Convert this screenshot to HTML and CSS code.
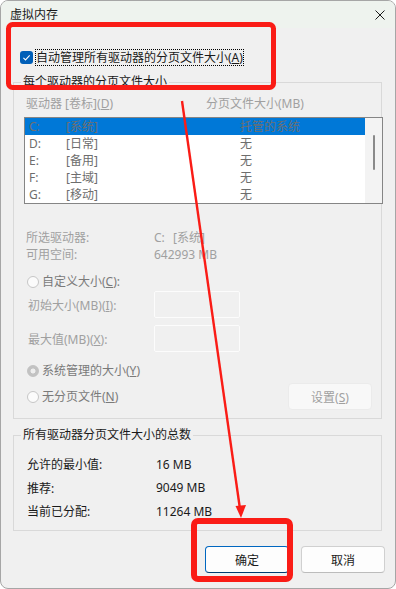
FILE: index.html
```html
<!DOCTYPE html>
<html lang="zh-CN">
<head>
<meta charset="utf-8">
<title>虚拟内存</title>
<link rel="stylesheet" href="styles.css">
</head>
<body>
<div class="window">
  <div class="titlebar">
    <span class="title">虚拟内存</span>
    <svg class="close" width="10" height="10" viewBox="0 0 10 10"><path d="M0.5 0.5L9.5 9.5M9.5 0.5L0.5 9.5" stroke="#1a1a1a" stroke-width="1" fill="none"/></svg>
  </div>

  <div class="auto-row">
    <span class="checkbox"><svg width="13" height="13" viewBox="0 0 13 13"><rect x="0" y="0" width="13" height="13" rx="3" fill="#005fb8"/><path d="M3.4 6.9L5.5 8.9L9.7 4.4" stroke="#fff" stroke-width="1.1" fill="none"/></svg></span>
    <span class="focus">自动管理所有驱动器的分页文件大小(<u>A</u>)</span>
  </div>

  <fieldset class="group g1">
    <legend>每个驱动器的分页文件大小</legend>
    <div class="list-head"><span class="col-drive">驱动器 [卷标](<u>D</u>)</span><span class="col-size">分页文件大小(MB)</span></div>
    <div class="listbox">
      <div class="rows">
        <div class="row sel"><span class="c1">C:</span><span class="c2">[系统]</span><span class="c3">托管的系统</span></div>
        <div class="row"><span class="c1">D:</span><span class="c2">[日常]</span><span class="c3">无</span></div>
        <div class="row"><span class="c1">E:</span><span class="c2">[备用]</span><span class="c3">无</span></div>
        <div class="row"><span class="c1">F:</span><span class="c2">[主域]</span><span class="c3">无</span></div>
        <div class="row"><span class="c1">G:</span><span class="c2">[移动]</span><span class="c3">无</span></div>
      </div>
      <div class="scrollbar"><span class="thumb"></span></div>
    </div>

    <div class="info">
      <div class="info-row"><span class="k">所选驱动器:</span><span class="v"><span class="drv">C:</span>[系统]</span></div>
      <div class="info-row"><span class="k">可用空间:</span><span class="v">642993 MB</span></div>
    </div>

    <div class="radio-row r-custom"><span class="radio"></span><span class="rtext">自定义大小(<u>C</u>):</span></div>
    <div class="field-row"><span class="k2">初始大小(MB)(<u>I</u>):</span><span class="input"></span></div>
    <div class="field-row f2"><span class="k2">最大值(MB)(<u>X</u>):</span><span class="input"></span></div>
    <div class="radio-row r-sys"><span class="radio checked"></span><span class="rtext">系统管理的大小(<u>Y</u>)</span></div>
    <div class="last-row">
      <div class="radio-row"><span class="radio"></span><span class="rtext">无分页文件(<u>N</u>)</span></div>
      <button class="btn-set" type="button">设置(<u>S</u>)</button>
    </div>
  </fieldset>

  <fieldset class="group g2">
    <legend>所有驱动器分页文件大小的总数</legend>
    <div class="sum-row"><span class="sk">允许的最小值:</span><span class="sv">16 MB</span></div>
    <div class="sum-row"><span class="sk">推荐:</span><span class="sv">9049 MB</span></div>
    <div class="sum-row"><span class="sk">当前已分配:</span><span class="sv">11264 MB</span></div>
  </fieldset>

  <div class="buttons">
    <button class="btn primary" type="button">确定</button>
    <button class="btn" type="button">取消</button>
  </div>

  <svg class="annot" width="396" height="589" viewBox="0 0 396 589">
    <rect x="8.5" y="24.5" width="265" height="63" rx="4" fill="none" stroke="#fa1c16" stroke-width="5"/>
    <rect x="194" y="521" width="96" height="58" rx="4" fill="none" stroke="#fa1c16" stroke-width="6"/>
    <line x1="182" y1="101" x2="240" y2="509" stroke="#fa1c16" stroke-width="2.4"/>
    <polygon points="241,518 235.5,506 246,505" fill="#fa1c16"/>
  </svg>
</div>
</body>
</html>
```

FILE: styles.css
```css
html, body {
  margin: 0;
  padding: 0;
  background: #ffffff;
}

body {
  font-family: "Noto Sans", "Noto Sans CJK SC", sans-serif;
  font-size: 12px;
  color: #1a1a1a;
}

.window {
  position: relative;
  width: 396px;
  height: 589px;
  box-sizing: border-box;
  border: 1px solid #a6a6a6;
  border-radius: 8px;
  background: #f0f0f0;
  overflow: hidden;
}

.titlebar {
  height: 27px;
  display: flex;
  align-items: center;
  justify-content: space-between;
  padding: 0 10px 0 9px;
  background: #eef3ee;
}

.title {
  line-height: 16px;
  color: #1a1a1a;
}

.close {
  display: block;
}

u {
  text-decoration: underline;
  text-underline-offset: 1px;
}

.auto-row {
  margin-top: 21px;
  height: 17px;
  display: flex;
  align-items: center;
  padding-left: 19px;
}

.checkbox {
  width: 13px;
  height: 13px;
  display: block;
}

.checkbox svg {
  display: block;
}

.focus {
  margin-left: 2px;
  height: 17px;
  line-height: 17px;
  padding: 0 1px;
  box-sizing: border-box;
  outline: 1px dotted #000;
  outline-offset: -1px;
  color: #1a1a1a;
  white-space: nowrap;
}

.group {
  margin: 0 13px 0 12px;
  border: 1px solid #d9d9d9;
  min-width: 0;
}

.group legend {
  padding: 0 2px;
  margin-left: 7px;
  line-height: 16px;
  color: #1a1a1a;
}

.g1 {
  margin-top: 8px;
  padding: 6px 0 8px 0;
}

.list-head {
  display: flex;
  line-height: 16px;
  padding-left: 12px;
  color: #a0a0a0;
}

.col-drive {
  width: 180px;
}

.listbox {
  margin-top: 5px;
  margin-left: 10px;
  width: 359px;
  height: 87px;
  box-sizing: border-box;
  border: 1px solid #858585;
  background: #ffffff;
  display: flex;
}

.rows {
  flex: 1;
}

.row {
  height: 17px;
  line-height: 17px;
  display: flex;
  padding-left: 4px;
  color: #6d6d6d;
}

.row.sel {
  background: #0078d7;
  color: #6f6f6f;
}

.c1 {
  width: 37px;
}

.c2 {
  width: 174px;
}

.scrollbar {
  width: 17px;
  background: #f3f3f3;
  position: relative;
}

.thumb {
  position: absolute;
  left: 8px;
  top: 17px;
  width: 2px;
  height: 35px;
  border-radius: 1px;
  background: #8a8a8a;
}

.info {
  margin-top: 25px;
  padding-left: 12px;
  color: #a0a0a0;
}

.info-row {
  height: 17px;
  line-height: 17px;
  display: flex;
}

.k {
  width: 128px;
}

.drv {
  display: inline-block;
  width: 19px;
}

.radio-row {
  height: 18px;
  display: flex;
  align-items: center;
  padding-left: 13px;
  color: #7a7a7a;
}

.r-custom {
  margin-top: 10px;
}

.r-sys {
  margin-top: 10px;
}

.radio {
  width: 12px;
  height: 12px;
  box-sizing: border-box;
  border-radius: 50%;
  border: 1px solid #c6c6c6;
  background: #fbfbfb;
  margin-right: 3px;
}

.radio.checked {
  border-color: #c2c2c2;
  background: radial-gradient(circle, #eeeeee 0 2.2px, #c2c2c2 2.8px);
}

.rtext {
  line-height: 18px;
}

.field-row {
  height: 27px;
  display: flex;
  align-items: center;
  padding-left: 14px;
  color: #a0a0a0;
}

.f2 {
  margin-top: 7px;
}

.k2 {
  width: 126px;
  line-height: 16px;
  padding-top: 3px;
}

.input {
  width: 86px;
  height: 27px;
  box-sizing: border-box;
  border: 1px solid #fcfcfc;
  border-radius: 2px;
}

.last-row {
  margin-top: 3px;
  height: 27px;
  display: flex;
  align-items: center;
  justify-content: space-between;
  padding-right: 9px;
}

.btn-set {
  width: 84px;
  height: 27px;
  border: 1px solid #ebebeb;
  border-radius: 4px;
  background: #f8f8f8;
  color: #a0a0a0;
  font-family: inherit;
  font-size: 12px;
  padding: 0;
}

.g2 {
  margin-top: 8px;
  padding: 9.5px 0 7px 0;
}

.sum-row {
  height: 23.5px;
  display: flex;
  align-items: center;
  padding-left: 13px;
  color: #1a1a1a;
}

.sk {
  width: 129px;
}

.buttons {
  margin-top: 15px;
  display: flex;
  justify-content: flex-end;
  gap: 12px;
  padding-right: 10px;
}

.btn {
  width: 84px;
  height: 27px;
  border: 1px solid #d0d0d0;
  border-bottom-color: #bcbcbc;
  border-radius: 4px;
  background: #fdfdfd;
  color: #1a1a1a;
  font-family: inherit;
  font-size: 12px;
  padding: 0;
}

.btn.primary {
  border-color: #0067c0;
  border-bottom-color: #003e73;
}

.annot {
  position: absolute;
  left: -1px;
  top: -1px;
  pointer-events: none;
}
```
